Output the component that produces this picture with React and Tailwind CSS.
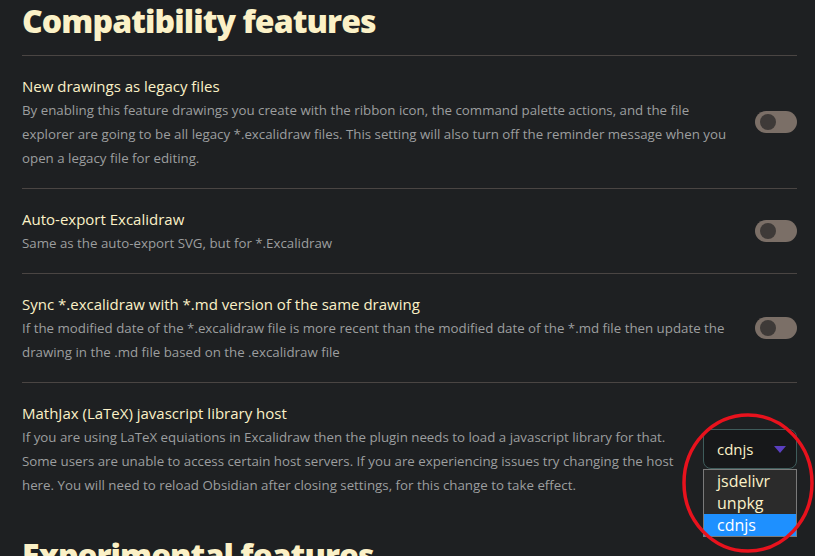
import React from 'react'

const settings = [
  {
    name: 'New drawings as legacy files',
    desc: 'By enabling this feature drawings you create with the ribbon icon, the command palette actions, and the file explorer are going to be all legacy *.excalidraw files. This setting will also turn off the reminder message when you open a legacy file for editing.',
    control: 'toggle',
  },
  {
    name: 'Auto-export Excalidraw',
    desc: 'Same as the auto-export SVG, but for *.Excalidraw',
    control: 'toggle',
  },
  {
    name: 'Sync *.excalidraw with *.md version of the same drawing',
    desc: 'If the modified date of the *.excalidraw file is more recent than the modified date of the *.md file then update the drawing in the .md file based on the .excalidraw file',
    control: 'toggle',
  },
  {
    name: 'MathJax (LaTeX) javascript library host',
    desc: 'If you are using LaTeX equiations in Excalidraw then the plugin needs to load a javascript library for that. Some users are unable to access certain host servers. If you are experiencing issues try changing the host here. You will need to reload Obsidian after closing settings, for this change to take effect.',
    control: 'select',
  },
]

const Toggle = () => (
  <div className="w-[42px] h-[22px] rounded-full bg-[#7b6f67] flex items-center px-[5px] shrink-0">
    <div className="w-[16px] h-[16px] rounded-full bg-[#3e3a38]" />
  </div>
)

const HostSelect = () => {
  const hosts = ['jsdelivr', 'unpkg', 'cdnjs']
  return (
    <div className="relative shrink-0">
      <div className="w-[94px] h-[40px] rounded-[8px] border border-[#3f5c5b] bg-[#17181a] flex items-center justify-between pl-[13px] pr-[10px]">
        <span className="text-[15px] text-[#fbf1c7]">cdnjs</span>
        <svg width="12" height="7" viewBox="0 0 12 7">
          <path d="M0 0 H12 L6 7 Z" fill="#5a3fc0" />
        </svg>
      </div>
      {/* native dropdown list */}
      <div className="absolute left-0 top-[40px] w-[94px] border border-[#7a7a7a] bg-[#2b2b2b] z-10">
        {hosts.map((h) => (
          <div
            key={h}
            className={`h-[22px] leading-[22px] pl-[13px] text-[16px] ${
              h === 'cdnjs' ? 'bg-[#1e90ff] text-white' : 'text-[#fbf1c7]'
            }`}
          >
            {h}
          </div>
        ))}
      </div>
      {/* red annotation circle */}
      <svg className="absolute -left-[22px] -top-[17px] pointer-events-none z-20" width="136" height="142" viewBox="0 0 136 142">
        <ellipse cx="67" cy="71" rx="64" ry="68" fill="none" stroke="#e8121d" strokeWidth="3.5" />
      </svg>
    </div>
  )
}

const App = () => {
  return (
    <div className="w-[815px] h-[556px] overflow-hidden bg-[#1e2022] pl-[22px] pr-[18px] font-['Segoe_UI','Open_Sans',sans-serif]">
      <h2 className="text-[32px] leading-[40px] font-extrabold text-[#fbf1c7] mt-[1px] pb-[14px] border-b border-[#4a4543] tracking-[-0.9px]">
        Compatibility features
      </h2>

      {settings.map((s, i) => (
        <div
          key={s.name}
          className={`flex items-center py-[18px] ${i < settings.length - 1 ? 'border-b border-[#4a4543]' : ''}`}
        >
          <div className={`flex-1 ${s.control === 'select' ? 'mr-[14px]' : 'mr-[20px]'}`}>
            <div className="text-[15px] leading-[24px] text-[#fbf1c7]">{s.name}</div>
            <div className="text-[13.3px] leading-[24px] text-[#9c9e9f]">{s.desc}</div>
          </div>
          {s.control === 'toggle' ? <Toggle /> : <HostSelect />}
        </div>
      ))}

      <h2 className="text-[32px] leading-[40px] font-extrabold text-[#fbf1c7] mt-[20px] tracking-[-0.9px]">
        Experimental features
      </h2>
    </div>
  )
}

export default App
